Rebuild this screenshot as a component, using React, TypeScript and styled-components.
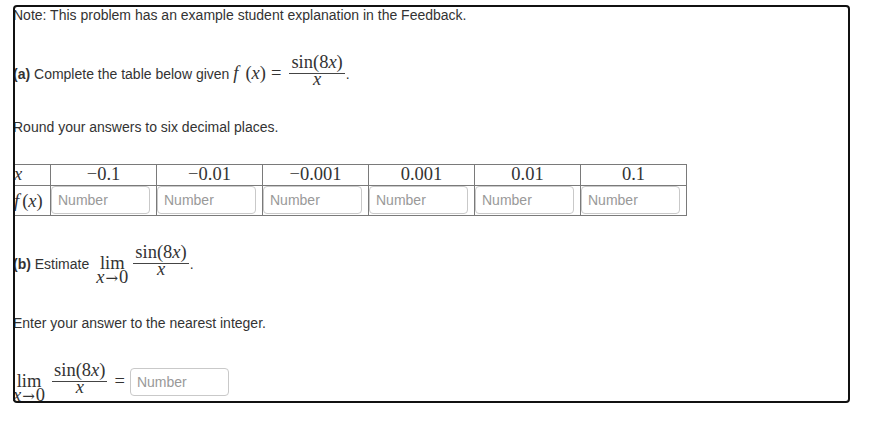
import React from "react";
import styled, { createGlobalStyle } from "styled-components";

const Global = createGlobalStyle`
  html, body { margin: 0; padding: 0; background: #fff; }
  body { font-family: "Liberation Sans", Arial, sans-serif; }
`;

const MATH = `"Liberation Serif", "Times New Roman", serif`;
const MSIZE = "18.5px";

const Card = styled.div`
  box-sizing: border-box;
  margin: 5px 0 0 13px;
  width: 837px;
  height: 398px;
  padding-top: 2px;
  border-radius: 4px;
  outline: 2px solid #111;
  outline-offset: -2px;
  overflow: hidden;
  font-family: "Liberation Sans", Arial, sans-serif;
  font-size: 14px;
  color: #333;
  display: flex;
  flex-direction: column;
  align-items: flex-start;
`;

const Line = styled.div<{ $top?: number }>`
  margin-top: ${(p) => p.$top ?? 0}px;
  line-height: 16px;
  white-space: nowrap;
`;

const Label = styled.b`
  font-weight: bold;
`;

const M = styled.span`
  font-family: ${MATH};
  font-size: ${MSIZE};
  color: #333;
`;

const V = styled.i`
  font-style: italic;
`;

const Paren = styled.span<{ $gap?: number }>`
  margin-left: ${(p) => p.$gap ?? 0}px;
`;

const Op = styled.span<{ $l?: number; $r?: number }>`
  font-family: ${MATH};
  font-size: ${MSIZE};
  margin: 0 ${(p) => p.$r ?? 4}px 0 ${(p) => p.$l ?? 4}px;
`;

const Frac = styled.span`
  display: inline-flex;
  flex-direction: column;
  align-items: stretch;
  vertical-align: 11px;
  font-family: ${MATH};
  font-size: ${MSIZE};
  color: #333;
`;

const Num = styled.span`
  display: block;
  text-align: center;
  line-height: 18px;
  padding: 0 2px 2px;
  border-bottom: 1px solid #444;
  white-space: nowrap;
`;

const Den = styled.span`
  display: block;
  text-align: center;
  line-height: 12px;
  margin-top: -1px;
`;

const Lim = styled.span<{ $l?: number; $r?: number }>`
  display: inline-flex;
  flex-direction: column;
  align-items: center;
  margin: 0 ${(p) => p.$r ?? 4}px 0 ${(p) => p.$l ?? 0}px;
  font-family: ${MATH};
  font-size: ${MSIZE};
  color: #333;
`;

const LimWord = styled.span`
  line-height: 16px;
`;

const LimSub = styled.span`
  line-height: 12px;
  white-space: nowrap;
`;

const Arrow = styled.span`
  font-family: "DejaVu Serif", serif;
  font-size: 15px;
  margin: 0 1px;
`;

const Dot = styled.span`
  margin-left: 1px;
`;

const Table = styled.table`
  margin-top: 29px;
  border-collapse: collapse;
  table-layout: fixed;
  width: 674px;
`;

const HeadCell = styled.td<{ $align?: string }>`
  border: 1px solid #7a7a7a;
  padding: 0 0 2px;
  height: 18px;
  line-height: 18px;
  text-align: ${(p) => p.$align ?? "center"};
  font-family: ${MATH};
  font-size: ${MSIZE};
  color: #333;
  white-space: nowrap;
`;

const InCell = styled.td`
  border: 1px solid #7a7a7a;
  padding: 0;
  height: 29px;
  vertical-align: top;
  white-space: nowrap;
`;

const LabelCell = styled(InCell)`
  vertical-align: middle;
  font-family: ${MATH};
  font-size: ${MSIZE};
  line-height: 18px;
  color: #333;
`;

const NumberInput = styled.input`
  box-sizing: border-box;
  width: 99px;
  height: 28px;
  margin: 0;
  padding: 0 6px;
  border: 1px solid #c9c9c9;
  border-radius: 4px;
  background: #fff;
  font-family: "Liberation Sans", Arial, sans-serif;
  font-size: 14px;
  color: #333;
  outline: none;
  &::placeholder {
    color: #999;
  }
`;

const xs = ["0.1", "0.01", "0.001"];

const LimX: React.FC<{ l: number; r: number }> = ({ l, r }) => (
  <Lim $l={l} $r={r}>
    <LimWord>lim</LimWord>
    <LimSub>
      <V>x</V>
      <Arrow>→</Arrow>0
    </LimSub>
  </Lim>
);

const SinFrac: React.FC = () => (
  <Frac>
    <Num>
      sin(8<V>x</V>)
    </Num>
    <Den>
      <V>x</V>
    </Den>
  </Frac>
);

const App: React.FC = () => {
  const heads = [...xs.map((v) => "\u2212" + v), ...[...xs].reverse()];
  return (
    <>
      <Global />
      <Card>
        <Line>Note: This problem has an example student explanation in the Feedback.</Line>
        <Line $top={30}>
          <Label>(a)</Label> Complete the table below given{" "}
          <M>
            <V>f</V>
            <Paren $gap={7}>(</Paren>
            <V>x</V>)
          </M>
          <Op $l={5} $r={8}>=</Op>
          <SinFrac />
          <Dot>.</Dot>
        </Line>
        <Line $top={34}>Round your answers to six decimal places.</Line>
        <Table>
          <colgroup>
            <col style={{ width: 37 }} />
            {heads.map((h) => (
              <col key={h} />
            ))}
          </colgroup>
          <tbody>
            <tr>
              <HeadCell $align="left">
                <V>x</V>
              </HeadCell>
              {heads.map((h) => (
                <HeadCell key={h}>{h}</HeadCell>
              ))}
            </tr>
            <tr>
              <LabelCell>
                <V>f</V>
                <Paren $gap={3}>(</Paren>
                <V>x</V>)
              </LabelCell>
              {heads.map((h) => (
                <InCell key={h}>
                  <NumberInput placeholder="Number" />
                </InCell>
              ))}
            </tr>
          </tbody>
        </Table>
        <Line $top={27}>
          <Label>(b)</Label> Estimate
          <LimX l={7} r={5} />
          <SinFrac />
          <Dot>.</Dot>
        </Line>
        <Line $top={31}>Enter your answer to the nearest integer.</Line>
        <Line $top={30}>
          <LimX l={0} r={7} />
          <SinFrac />
          <Op $l={7} $r={5}>=</Op>
          <NumberInput placeholder="Number" />
        </Line>
      </Card>
    </>
  );
};

export default App;
